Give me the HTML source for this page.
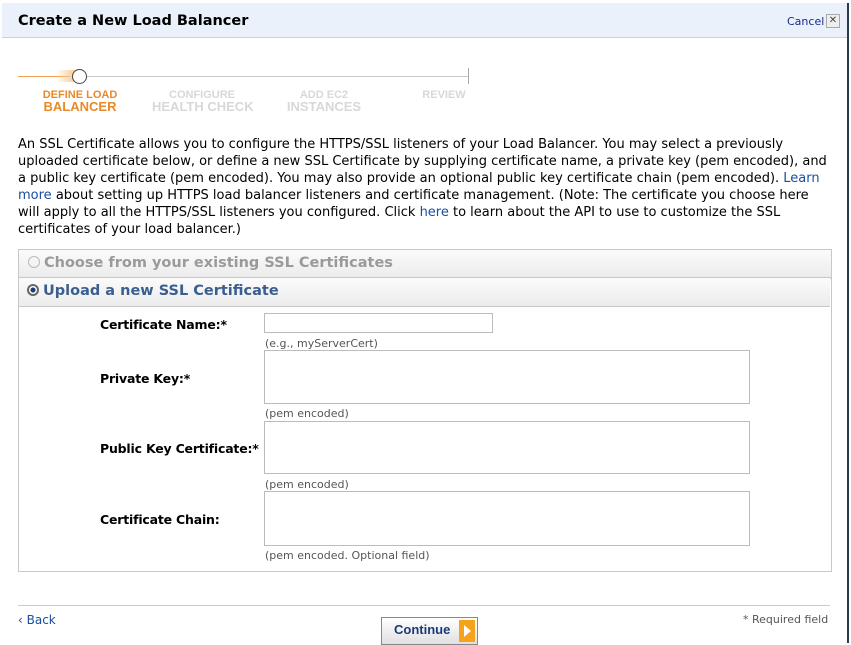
<!DOCTYPE html>
<html><head><style>
body{margin:0;width:851px;height:643px;background:#fff;font-family:"DejaVu Sans",Verdana,sans-serif;position:relative;overflow:hidden;color:#000}
.abs{position:absolute}
.hdr{left:2px;top:3px;width:845px;height:34px;background:#eaf1fb;border-bottom:1px solid #c6d3e3}
.vline{left:847px;top:3px;width:2px;height:640px;background:#2a3a4a}
.step{font-family:"Liberation Sans",Arial,sans-serif;font-weight:bold;font-size:11px;text-align:center;line-height:12px;color:#d8d8d8;white-space:nowrap}
p{margin:0}
.sec{left:18px;width:812px;height:27px;background:linear-gradient(#fbfbfb,#ececec);border:1px solid #c8c8c8;font-weight:bold;font-size:14.5px;line-height:27px}
.lbl{font-weight:bold;font-size:12.5px;left:100px;letter-spacing:-0.2px}
.ta{left:264px;width:484px;border:1px solid #bcbcbc;background:#fff}
.hint{left:265px;font-size:11px;color:#555}
a{color:#1a4ea0;text-decoration:none}
</style></head><body>
<div class="abs hdr"></div>
<div class="abs" style="left:18px;top:13px;font-weight:bold;font-size:14.5px">Create a New Load Balancer</div>
<div class="abs" style="left:787px;top:15px;font-size:11px;color:#1a2a8a">Cancel</div>
<div class="abs" style="left:826px;top:14px;width:12px;height:12px;border:1px solid #aaa;background:#eee;font-size:10px;line-height:12px;text-align:center;color:#444">✕</div>
<div class="abs vline"></div>

<div class="abs" style="left:18px;top:76px;width:52px;height:1px;background:#f0a050"></div>
<div class="abs" style="left:56px;top:70px;width:20px;height:12px;background:linear-gradient(90deg,rgba(255,255,255,0),#f9c890)"></div>
<div class="abs" style="left:86px;top:76px;width:383px;height:1px;background:#c8c8c8"></div>
<div class="abs" style="left:468px;top:68px;width:1px;height:16px;background:#aaa"></div>
<div class="abs" style="left:72px;top:69px;width:13px;height:13px;border:1px solid #444;border-radius:50%;background:#fff"></div>
<div class="abs step" style="left:38px;top:89px;width:84px;color:#e8892a">DEFINE LOAD<br><span style="font-size:13px">BALANCER</span></div>
<div class="abs step" style="left:152px;top:89px;width:100px">CONFIGURE<br><span style="font-size:13px">HEALTH CHECK</span></div>
<div class="abs step" style="left:284px;top:89px;width:80px">ADD EC2<br><span style="font-size:13px">INSTANCES</span></div>
<div class="abs step" style="left:414px;top:89px;width:60px">REVIEW</div>

<div class="abs" style="left:18px;top:136px;width:815px;font-size:13px;line-height:17px">An SSL Certificate allows you to configure the HTTPS/SSL listeners of your Load Balancer. You may select a previously uploaded certificate below, or define a new SSL Certificate by supplying certificate name, a private key (pem encoded), and a public key certificate (pem encoded). You may also provide an optional public key certificate chain (pem encoded). <a>Learn more</a> about setting up HTTPS load balancer listeners and certificate management. (Note: The certificate you choose here will apply to all the HTTPS/SSL listeners you configured. Click <a>here</a> to learn about the API to use to customize the SSL certificates of your load balancer.)</div>

<div class="abs sec" style="top:249px;color:#9a9a9a"><span style="display:inline-block;width:10px;height:10px;border:1px solid #bbb;border-radius:50%;margin:0 4px 0 9px;vertical-align:-1px"></span>Choose from your existing SSL Certificates</div>
<div class="abs" style="left:18px;top:278px;width:812px;height:292px;border:1px solid #c8c8c8"></div>
<div class="abs sec" style="top:278px;color:#3a5f8f;border-top:0;border-left:0;border-right:0;left:19px;width:811px;height:28px"><span style="display:inline-block;width:8px;height:8px;border:2px solid #666;border-radius:50%;margin:0 4px 0 8px;vertical-align:-1px;background:radial-gradient(#1a4070 40%,#fff 50%)"></span>Upload a new SSL Certificate</div>

<div class="abs lbl" style="top:317px">Certificate Name:*</div>
<div class="abs ta" style="top:313px;width:227px;height:18px"></div>
<div class="abs hint" style="top:337px">(e.g., myServerCert)</div>
<div class="abs lbl" style="top:371px">Private Key:*</div>
<div class="abs ta" style="top:350px;height:52px"></div>
<div class="abs hint" style="top:407px">(pem encoded)</div>
<div class="abs lbl" style="top:441px">Public Key Certificate:*</div>
<div class="abs ta" style="top:421px;height:51px"></div>
<div class="abs hint" style="top:478px">(pem encoded)</div>
<div class="abs lbl" style="top:512px">Certificate Chain:</div>
<div class="abs ta" style="top:491px;height:53px"></div>
<div class="abs hint" style="top:549px">(pem encoded. Optional field)</div>

<div class="abs" style="left:18px;top:605px;width:812px;height:1px;background:#ccc"></div>
<div class="abs" style="left:18px;top:613px;font-size:12px"><a>‹ Back</a></div>
<div class="abs" style="left:743px;top:613px;font-size:11px;color:#555">* Required field</div>
<div class="abs" style="left:381px;top:617px;width:95px;height:26px;border:1px solid #888;background:linear-gradient(#fff,#e0e0e0)">
<span class="abs" style="left:12px;top:4px;font-family:'Liberation Sans',Arial,sans-serif;font-weight:bold;font-size:13px;color:#1a3a7a">Continue</span>
<span class="abs" style="left:77px;top:2px;width:16px;height:22px;background:#f7a21b"></span>
<span class="abs" style="left:82px;top:7px;width:0;height:0;border-left:7px solid #fff;border-top:6px solid transparent;border-bottom:6px solid transparent"></span>
</div>
</body></html>
